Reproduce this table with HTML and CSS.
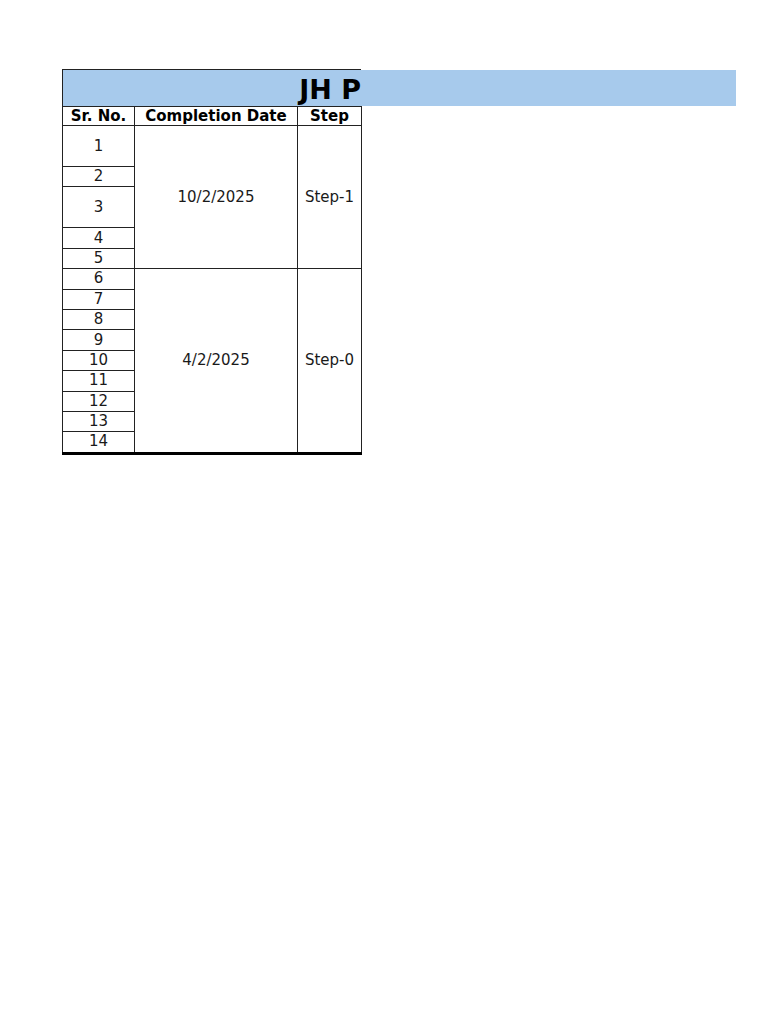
FILE: index.html
```html
<!DOCTYPE html>
<html>
<head>
<meta charset="utf-8">
<link rel="stylesheet" href="styles.css">
</head>
<body>
<div class="sheet">
  <div class="title-row">
    <div class="title-cell"><span class="title-text">JH P</span></div>
    <div class="title-fill"></div>
  </div>
  <table class="grid">
    <colgroup>
      <col class="c1"><col class="c2"><col class="c3">
    </colgroup>
    <thead>
      <tr class="head"><th>Sr. No.</th><th>Completion Date</th><th>Step</th></tr>
    </thead>
    <tbody>
      <tr class="tall"><td>1</td><td rowspan="5">10/2/2025</td><td rowspan="5">Step-1</td></tr>
      <tr class="r"><td>2</td></tr>
      <tr class="tall"><td>3</td></tr>
      <tr class="r"><td>4</td></tr>
      <tr class="r"><td>5</td></tr>
      <tr class="r"><td>6</td><td rowspan="9" class="end">4/2/2025</td><td rowspan="9" class="end">Step-0</td></tr>
      <tr class="r"><td>7</td></tr>
      <tr class="r"><td>8</td></tr>
      <tr class="r"><td>9</td></tr>
      <tr class="r"><td>10</td></tr>
      <tr class="r"><td>11</td></tr>
      <tr class="r"><td>12</td></tr>
      <tr class="r"><td>13</td></tr>
      <tr class="r"><td class="end">14</td></tr>
    </tbody>
  </table>
</div>
</body>
</html>
```
FILE: styles.css
```css
html, body {
  margin: 0;
  padding: 0;
  background: #ffffff;
}
body {
  font-family: "DejaVu Sans", "Liberation Sans", sans-serif;
  color: #1a1a1a;
}
.sheet {
  padding: 69px 0 0 62px;
}
.title-row {
  display: flex;
  height: 37px;
}
.title-cell {
  width: 298px;
  background: #a7caec;
  border-top: 1px solid #222;
  border-left: 1px solid #222;
  display: flex;
  justify-content: flex-end;
  align-items: center;
}
.title-text {
  font-weight: bold;
  font-size: 27px;
  white-space: nowrap;
  color: #000;
  line-height: 1;
  padding-top: 2px;
}
.title-fill {
  width: 375px;
  background: #a7caec;
  margin-top: 1px;
}
.grid {
  border-collapse: collapse;
  table-layout: fixed;
  width: 300px;
  font-size: 15px;
}
.c1 { width: 72px; }
.c2 { width: 163px; }
.c3 { width: 64px; }
.grid th, .grid td {
  border: 1px solid #222;
  padding: 0;
  text-align: center;
  vertical-align: middle;
  line-height: 1;
}
.grid th {
  font-weight: bold;
  height: 18px;
  color: #000;
}
.tall td:first-child { height: 40px; }
.r td:first-child { height: 19.4px; }
.grid td.end {
  border-bottom: 3px solid #000;
}
```
